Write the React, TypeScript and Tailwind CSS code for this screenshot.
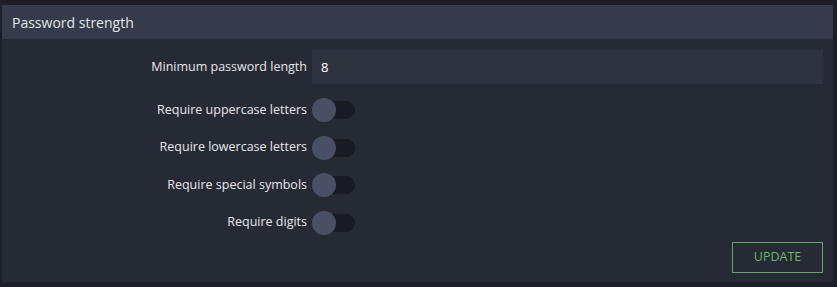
import React, { useState } from "react";

const Toggle = ({ checked, onChange }: { checked: boolean; onChange: () => void }) => (
  <button
    type="button"
    onClick={onChange}
    className="relative h-[24px] w-[43px] flex items-center"
  >
    <span className="absolute left-[1px] right-0 h-[18px] rounded-full bg-[#181b22]" />
    <span
      className={
        "absolute h-[24px] w-[24px] rounded-full bg-[#4a5064] " +
        (checked ? "left-[19px]" : "left-0")
      }
    />
  </button>
);

export default function App() {
  const [length, setLength] = useState("8");
  const [opts, setOpts] = useState({
    upper: false,
    lower: false,
    special: false,
    digits: false,
  });

  const rows: { key: keyof typeof opts; label: string }[] = [
    { key: "upper", label: "Require uppercase letters" },
    { key: "lower", label: "Require lowercase letters" },
    { key: "special", label: "Require special symbols" },
    { key: "digits", label: "Require digits" },
  ];

  return (
    <div
      className="h-[287px] w-[837px] bg-[#1c1f27] pt-[5px] pl-[2px] pr-[4px] pb-[5px]"
      style={{ fontFamily: '"Open Sans", "Noto Sans", sans-serif' }}
    >
      <div className="flex h-full flex-col bg-[#262a35]">
        <div className="flex h-[34px] items-center bg-[#363b4b] px-[10px] text-[14px] font-medium text-[#e4e6ea]">
          Password strength
        </div>

        <div className="flex flex-1 flex-col pt-[11px] pr-[10px]">
          <div className="flex items-center">
            <label className="w-[310px] pr-[5px] text-right text-[12.5px] font-medium text-[#e6e7ea]">
              Minimum password length
            </label>
            <input
              value={length}
              onChange={(e) => setLength(e.target.value)}
              className="h-[34px] flex-1 bg-[#2f3340] px-[9px] text-[13px] font-medium text-white outline-none"
            />
          </div>

          <div className="mt-[14px] flex flex-col gap-[13.5px]">
            {rows.map((r) => (
              <div key={r.key} className="flex items-center">
                <span className="w-[310px] pr-[5px] text-right text-[12.5px] font-medium text-[#e6e7ea]">
                  {r.label}
                </span>
                <Toggle
                  checked={opts[r.key]}
                  onChange={() => setOpts({ ...opts, [r.key]: !opts[r.key] })}
                />
              </div>
            ))}
          </div>

          <div className="mt-auto mb-[9px] flex justify-end">
            <button className="h-[31px] w-[91px] border border-[#5fa863] text-[12.5px] text-[#6db56f]">
              UPDATE
            </button>
          </div>
        </div>
      </div>
    </div>
  );
}
